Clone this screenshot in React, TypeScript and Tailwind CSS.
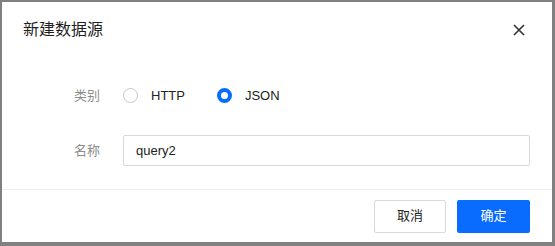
import React, { useState } from 'react';

const font = { fontFamily: '"Liberation Sans", "Noto Sans CJK SC", sans-serif' };

export default function App() {
  const [kind, setKind] = useState<'HTTP' | 'JSON'>('JSON');
  const [name, setName] = useState('query2');

  return (
    <div className="w-[555px] h-[246px] bg-[#808080] pt-[2px] pl-[2px] pr-[3px] pb-[4px]" style={font}>
      <div className="w-[550px] h-[240px] bg-white flex flex-col">
        {/* Header */}
        <div className="h-[55px] flex items-center justify-between pl-[21px] pr-[27px]">
          <span className="text-[16px] text-[#1f1f1f]">新建数据源</span>
          <button className="text-[#333] w-[12px] h-[12px] flex items-center justify-center">
            <svg width="12" height="12" viewBox="0 0 12 12" fill="none" stroke="currentColor" strokeWidth="1.6">
              <path d="M1 1L11 11M11 1L1 11" />
            </svg>
          </button>
        </div>

        {/* Body */}
        <div className="flex-1 flex flex-col gap-[24px] pt-[23px]">
          <div className="flex items-center h-[31px]">
            <label className="w-[98px] text-right text-[13px] text-[#8c8c8c]">类别</label>
            <div className="ml-[23px] flex items-center gap-[32px]">
              {(['HTTP', 'JSON'] as const).map((k) => (
                <button key={k} onClick={() => setKind(k)} className="flex items-center gap-[13px] text-[13px] text-[#222]">
                  {kind === k ? (
                    <span className="w-[15px] h-[15px] rounded-full border-[4px] border-[#0a6cff] bg-white" />
                  ) : (
                    <span className="w-[15px] h-[15px] rounded-full border border-[#c8c8c8] bg-white" />
                  )}
                  {k}
                </button>
              ))}
            </div>
          </div>
          <div className="flex items-center h-[31px]">
            <label className="w-[98px] text-right text-[13px] text-[#8c8c8c]">名称</label>
            <input
              value={name}
              onChange={(e) => setName(e.target.value)}
              className="ml-[23px] w-[407px] h-[31px] border border-[#d9d9d9] rounded-[2px] px-[12px] text-[13px] text-[#222] outline-none"
            />
          </div>
        </div>

        {/* Footer */}
        <div className="h-[53px] border-t border-[#f0f0f0] flex items-center justify-end gap-[11px] pr-[22px]">
          <button className="w-[72px] h-[33px] border border-[#d9d9d9] rounded-[2px] text-[13px] text-[#222] bg-white">取消</button>
          <button className="w-[73px] h-[33px] rounded-[2px] text-[13px] text-white bg-[#0a6cff]">确定</button>
        </div>
      </div>
    </div>
  );
}
